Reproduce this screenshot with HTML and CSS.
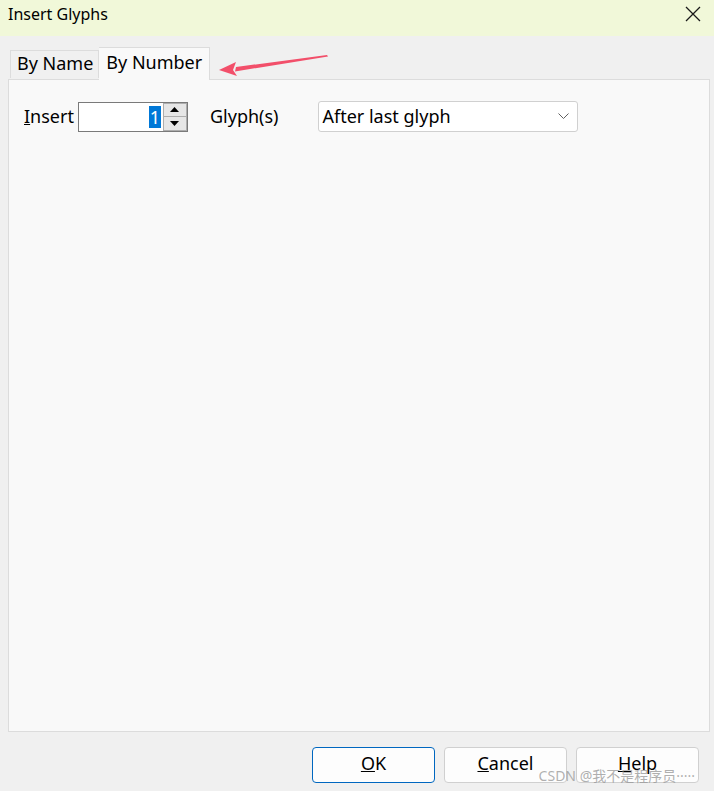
FILE: index.html
```html
<!DOCTYPE html>
<html lang="en">
<head>
    <meta charset="UTF-8">
    <title>Insert Glyphs</title>
    <link rel="stylesheet" href="styles.css">
</head>
<body>
<div class="titlebar">
    <span class="title">Insert Glyphs</span>
    <svg class="close" width="16" height="16" viewBox="0 0 16 16">
        <path d="M1 1 L15 15 M15 1 L1 15" stroke="#1a1a1a" stroke-width="1.3" fill="none"/>
    </svg>
</div>
<div class="dialog">
    <div class="tabs">
        <div class="tab">By Name</div>
        <div class="tab active">By Number</div>
    </div>
    <svg class="arrow" width="120" height="24" viewBox="0 0 120 24">
        <path d="M109 1 L18 13 L17 17.5 L110 2.5 Z" fill="#f24f6a"/>
        <path d="M1 16 L18 8 L15 16 L19 22 Z" fill="#f24f6a"/>
    </svg>
    <div class="panel">
        <div class="row">
            <label class="label"><u>I</u>nsert</label>
            <div class="spin">
                <div class="spin-field"><span class="sel">1</span></div>
                <div class="spin-btns">
                    <div class="spin-btn">
                        <svg width="9" height="5" viewBox="0 0 9 5"><path d="M0 5 L4.5 0 L9 5 Z" fill="#000"/></svg>
                    </div>
                    <div class="spin-btn">
                        <svg width="9" height="5" viewBox="0 0 9 5"><path d="M0 0 L4.5 5 L9 0 Z" fill="#000"/></svg>
                    </div>
                </div>
            </div>
            <span class="label glyphs">Glyph(s)</span>
            <div class="select">
                <span>After last glyph</span>
                <svg width="11" height="6" viewBox="0 0 11 6">
                    <path d="M0.5 0.5 L5.5 5.5 L10.5 0.5" stroke="#606060" stroke-width="1" fill="none"/>
                </svg>
            </div>
        </div>
    </div>
    <div class="footer">
        <button class="btn default"><u>O</u>K</button>
        <button class="btn"><u>C</u>ancel</button>
        <button class="btn"><u>H</u>elp</button>
        <span class="watermark">CSDN @我不是程序员·····</span>
    </div>
</div>
</body>
</html>
```

FILE: styles.css
```css
body {
    margin: 0;
    width: 714px;
    height: 791px;
    background-color: #f0f0f0;
    font-family: "Noto Sans", "Open Sans", sans-serif;
    color: #000;
    overflow: hidden;
}
.titlebar {
    height: 36px;
    background-color: #f1f8d9;
    display: flex;
    align-items: center;
    justify-content: space-between;
    padding: 0 13px 0 8px;
}
.title {
    font-size: 16px;
    margin-top: -8px;
}
.close {
    margin-top: -8px;
}
.dialog {
    position: relative;
    padding: 11px 4px 0 8px;
}
.tabs {
    display: flex;
    align-items: flex-end;
    padding-left: 2px;
    height: 32px;
}
.tab {
    height: 28px;
    margin-bottom: 1px;
    padding: 0 5px 0 6px;
    background-color: #f0f0f0;
    border: 1px solid #dcdcdc;
    border-bottom: none;
    font-size: 18px;
    line-height: 25px;
    box-sizing: border-box;
}
.tab.active {
    height: 33px;
    margin-bottom: -1px;
    background-color: #f9f9f9;
    border-left: none;
    padding: 0 7px 0 7px;
    line-height: 28px;
    position: relative;
    z-index: 1;
}
.arrow {
    position: absolute;
    left: 218px;
    top: 18px;
}
.panel {
    height: 653px;
    box-sizing: border-box;
    background-color: #f9f9f9;
    border: 1px solid #dcdcdc;
    padding: 21px 0 0 15px;
}
.row {
    display: flex;
    align-items: center;
    height: 31px;
}
.label {
    font-size: 18px;
    margin-top: -2px;
}
.spin {
    display: flex;
    width: 110px;
    height: 30px;
    box-sizing: border-box;
    border: 1px solid #7a7a7a;
    background-color: #fff;
    margin-left: 4px;
}
.spin-field {
    flex: 1;
    display: flex;
    justify-content: flex-end;
    align-items: center;
    padding-right: 2px;
}
.sel {
    background-color: #0078d7;
    color: #fff;
    font-size: 18px;
    line-height: 22px;
    padding: 0 1px;
}
.spin-btns {
    width: 24px;
    display: flex;
    flex-direction: column;
}
.spin-btn {
    flex: 1;
    background-color: #e6e6e6;
    border: 1px solid #adadad;
    display: flex;
    align-items: center;
    justify-content: center;
}
.spin-btn + .spin-btn {
    border-top: none;
}
.glyphs {
    margin-left: 22px;
}
.select {
    margin-left: 39px;
    width: 260px;
    height: 31px;
    box-sizing: border-box;
    background-color: #fff;
    border: 1px solid #d0d0d0;
    border-radius: 3px;
    display: flex;
    align-items: center;
    justify-content: space-between;
    padding: 0 8px 2px 4px;
    font-size: 18px;
}
.footer {
    position: relative;
    display: flex;
    justify-content: flex-end;
    gap: 9px;
    padding: 15px 11px 0 0;
}
.btn {
    width: 123px;
    height: 36px;
    background-color: #fdfdfd;
    border: 1px solid #d0d0d0;
    border-radius: 4px;
    font-family: "Noto Sans", "Open Sans", sans-serif;
    font-size: 18px;
    color: #000;
    padding: 0 0 4px 0;
}
.btn.default {
    border: 1px solid #0067c0;
}
.watermark {
    position: absolute;
    right: 15px;
    top: 33px;
    font-size: 14px;
    color: rgba(150, 150, 150, 0.75);
    font-family: "Noto Sans", "Noto Sans CJK SC", sans-serif;
}
```
